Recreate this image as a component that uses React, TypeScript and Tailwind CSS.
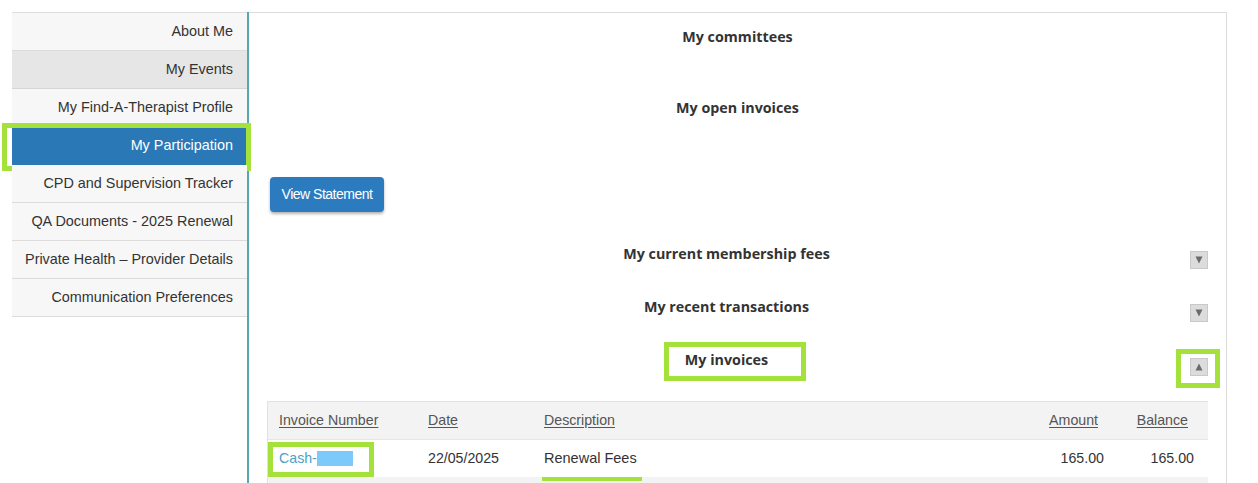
import React from 'react';

const navItems = [
  'About Me',
  'My Events',
  'My Find-A-Therapist Profile',
  'My Participation',
  'CPD and Supervision Tracker',
  'QA Documents - 2025 Renewal',
  'Private Health \u2013 Provider Details',
  'Communication Preferences',
];

const Toggle: React.FC<{ up?: boolean; className?: string }> = ({ up, className }) => (
  <div
    className={`w-[18px] h-[18px] bg-[#dcdcdc] border border-[#c9c9c9] flex items-center justify-center shrink-0 ${className || ''}`}
  >
    <svg width="8" height="8" viewBox="0 0 8 8">
      {up ? <path d="M4 0.5 L7.5 7.5 L0.5 7.5 Z" fill="#6b6b6b" /> : <path d="M0.5 0.5 L7.5 0.5 L4 7.5 Z" fill="#6b6b6b" />}
    </svg>
  </div>
);

const Heading: React.FC<{ children: React.ReactNode }> = ({ children }) => (
  <span className="font-['Open_Sans',sans-serif] font-bold text-[14.3px] leading-[20px] text-[#333]">{children}</span>
);

const App: React.FC = () => {
  return (
    <div className="w-[1258px] h-[483px] overflow-hidden bg-white pt-3 pl-3 font-['Liberation_Sans',Arial,sans-serif]">
      <div className="flex w-[1215px] h-full">
        {/* sidebar */}
        <div className="w-[235px] shrink-0 border-t border-[#dedede]">
          {navItems.map(item => {
            const active = item === 'My Participation';
            const hover = item === 'My Events';
            return (
              <div
                key={item}
                className={`relative h-[38px] flex items-center justify-end pr-[14px] text-[14.4px] border-b ${
                  active
                    ? 'bg-[#2b78b6] text-white border-[#2b78b6]'
                    : hover
                    ? 'bg-[#e6e6e6] text-[#333] border-[#d6d6d6]'
                    : 'bg-[#f7f7f7] text-[#333] border-[#dcdcdc]'
                }`}
              >
                {item}
                {active && (
                  <span className="absolute left-[-10px] right-[-4px] top-[-4px] bottom-[-7px] border-[5px] border-[#a4e23b] pointer-events-none" />
                )}
              </div>
            );
          })}
        </div>

        {/* divider */}
        <div className="w-[2px] bg-[#55a8ae] shrink-0" />

        {/* main */}
        <div className="flex-1 border-t border-r border-[#dcdcdc] px-[18px]">
          <div className="mt-[12px] h-[20px] text-center">
            <Heading>My committees</Heading>
          </div>
          <div className="mt-[51px] h-[20px] text-center">
            <Heading>My open invoices</Heading>
          </div>
          <button className="mt-[61px] ml-[3px] h-[35px] w-[114px] rounded-[4px] bg-[#2c7bbf] text-white text-[14px] tracking-[-0.5px] shadow-[0_2px_3px_rgba(0,0,0,0.3)] block">
            View Statement
          </button>

          <div className="mt-[30px] h-[20px] flex items-start">
            <div className="flex-1 text-center pr-[4px]">
              <Heading>My current membership fees</Heading>
            </div>
            <Toggle className="mt-[9px]" />
          </div>

          <div className="mt-[33px] h-[20px] flex items-start">
            <div className="flex-1 text-center pr-[4px]">
              <Heading>My recent transactions</Heading>
            </div>
            <Toggle className="mt-[9px]" />
          </div>

          <div className="mt-[33px] h-[20px] flex items-start">
            <div className="flex-1 text-center pr-[4px]">
              <span className="relative inline-block">
                <Heading>My invoices</Heading>
                <span className="absolute left-[-21px] right-[-38px] top-[-6px] bottom-[-9px] border-[5px] border-[#a4e23b]" />
              </span>
            </div>
            <div className="relative mt-[10px]">
              <Toggle up />
              <span className="absolute left-[-14px] right-[-12px] top-[-9px] bottom-[-12px] border-[5px] border-[#a4e23b]" />
            </div>
          </div>

          {/* invoices table */}
          <div className="mt-[33px] border-t border-l border-[#e2e2e2] text-[14.2px]">
            <div className="grid grid-cols-[149px_116px_1fr_90px_90px] h-[37px] items-center bg-[#f3f3f3] text-[#555]">
              <div className="pl-[11px] underline underline-offset-2">Invoice Number</div>
              <div className="pl-[11px] underline underline-offset-2">Date</div>
              <div className="pl-[11px] underline underline-offset-2">Description</div>
              <div className="pr-[20px] text-right underline underline-offset-2">Amount</div>
              <div className="pr-[20px] text-right underline underline-offset-2">Balance</div>
            </div>
            <div className="grid grid-cols-[149px_116px_1fr_90px_90px] h-[38px] items-center bg-white text-[#333] border-t border-[#e6e6e6]">
              <div className="pl-[11px] relative h-full flex items-center">
                <span className="text-[#4aa3c8]">Cash-</span>
                <span className="inline-block w-[36px] h-[15px] bg-[#7dc9f9]" />
                <span className="absolute left-0 top-[2px] w-[106px] h-[35px] border-[5px] border-[#a4e23b]" />
              </div>
              <div className="pl-[11px]">22/05/2025</div>
              <div className="pl-[11px] relative h-full flex items-center">
                <span className="text-[14.5px]">Renewal Fees</span>
                <span className="absolute left-[9px] bottom-[-4px] w-[100px] h-[4px] bg-[#a4e23b]" />
              </div>
              <div className="pr-[14px] text-right">165.00</div>
              <div className="pr-[14px] text-right">165.00</div>
            </div>
            <div className="h-[38px] bg-[#f3f3f3]" />
          </div>
        </div>
      </div>
    </div>
  );
};

export default App;
